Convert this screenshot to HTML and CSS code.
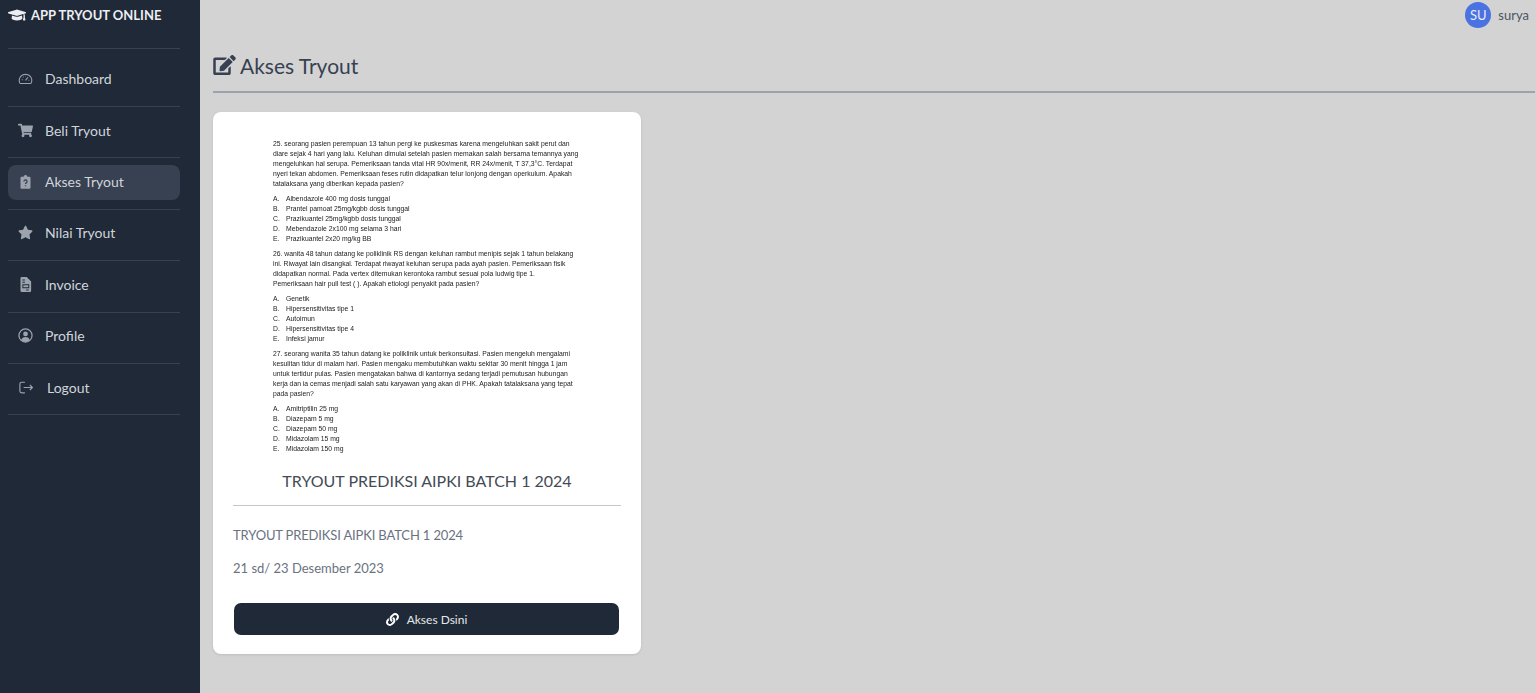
FILE: index.html
```html
<!DOCTYPE html>
<html lang="id">
<head>
    <meta charset="UTF-8">
    <meta name="viewport" content="width=device-width, initial-scale=1.0">
    <title>APP TRYOUT ONLINE</title>
    <link rel="stylesheet" href="styles.css">
</head>
<body>

<div class="app">
    <aside class="sidebar">
        <div class="brand">
            <svg class="brand-icon" viewBox="0 0 640 512"><g transform="translate(640 0) scale(-1 1)"><path d="M622.34 153.2L343.4 67.5c-15.2-4.67-31.6-4.67-46.79 0L17.66 153.2c-23.54 7.23-23.54 38.36 0 45.59l48.63 14.94c-10.67 13.19-17.23 29.28-17.88 46.9C38.78 266.15 32 276.11 32 288c0 10.78 5.68 19.85 13.86 25.65L20.33 428.53C18.11 438.52 25.71 448 35.94 448h56.11c10.24 0 17.84-9.48 15.62-19.47L82.14 313.65C90.32 307.85 96 298.78 96 288c0-11.57-6.47-21.25-15.66-26.87.76-15.02 8.44-28.3 20.69-36.72L296.6 284.5c9.06 2.78 26.44 6.25 46.79 0l278.95-85.7c23.55-7.24 23.55-38.36 0-45.6zM352.79 315.09c-28.53 8.76-52.84 3.92-65.59 0l-145.02-44.55L128 384c0 35.35 85.96 64 192 64s192-28.65 192-64l-14.18-113.47-145.03 44.56z"/></g></svg>
            <span>APP TRYOUT ONLINE</span>
        </div>

        <nav class="menu">
            <div class="menu-item menu-first">
                <a class="menu-link" href="#">
                    <svg class="menu-icon icon-line" viewBox="0 0 24 24" stroke-width="1.7"><path d="M4.2 20h15.6a1.5 1.5 0 0 0 1.3-.8A10 10 0 1 0 2.9 19.2a1.5 1.5 0 0 0 1.3.8z"/><path d="M12 15l4-5M6 14h1.5M17 15h1M8 9.500l.8.8M12 7.500v1"/></svg>
                    <span>Dashboard</span>
                </a>
            </div>
            <div class="menu-item">
                <a class="menu-link" href="#">
                    <svg class="menu-icon" viewBox="0 0 576 512"><path d="M528.12 301.319l47.273-208C578.806 78.301 567.391 64 551.99 64H159.208l-9.166-44.81C147.758 8.021 137.93 0 126.529 0H24C10.745 0 0 10.745 0 24v16c0 13.255 10.745 24 24 24h69.883l70.248 343.435C147.325 417.1 136 435.222 136 456c0 30.928 25.072 56 56 56s56-25.072 56-56c0-15.674-6.447-29.835-16.824-40h209.647C430.447 426.165 424 440.326 424 456c0 30.928 25.072 56 56 56s56-25.072 56-56c0-22.172-12.888-41.332-31.579-50.405l5.517-24.276c3.413-15.018-8.002-29.319-23.403-29.319H218.117l-6.545-32h293.145c11.206 0 20.92-7.754 23.403-18.681z"/></svg>
                    <span>Beli Tryout</span>
                </a>
            </div>
            <div class="menu-item">
                <a class="menu-link active" href="#">
                    <svg class="menu-icon" viewBox="0 0 24 24"><path d="M9 4.500a3 3 0 0 1 6 0h3.500A1.500 1.500 0 0 1 20 6v16a1.500 1.500 0 0 1-1.500 1.500h-13A1.500 1.500 0 0 1 4 22V6a1.500 1.500 0 0 1 1.500-1.500z"/><path class="bag-mark" d="M9.500 12a2.500 2.500 0 1 1 3.700 2.200c-.8.500-1.200.9-1.200 1.800M12 18v1.500"/></svg>
                    <span>Akses Tryout</span>
                </a>
            </div>
            <div class="menu-item">
                <a class="menu-link" href="#">
                    <svg class="menu-icon" viewBox="0 0 576 512"><path d="M259.3 17.8L194 150.2 47.9 171.5c-26.2 3.8-36.7 36.1-17.7 54.6l105.7 103-25 145.5c-4.5 26.3 23.2 46 46.4 33.7L288 439.6l130.7 68.7c23.2 12.2 50.9-7.4 46.4-33.7l-25-145.5 105.7-103c19-18.5 8.5-50.8-17.7-54.6L382 150.2 316.7 17.8c-11.7-23.6-45.6-23.9-57.4 0z"/></svg>
                    <span>Nilai Tryout</span>
                </a>
            </div>
            <div class="menu-item">
                <a class="menu-link" href="#">
                    <svg class="menu-icon" viewBox="0 0 24 24"><path fill-rule="evenodd" d="M6 0h8l7 7v15a2 2 0 0 1-2 2H6a2 2 0 0 1-2-2V2a2 2 0 0 1 2-2zm1 4v1.500h4V4zm0 3.500V9h4V7.500zM7 11.500v6.500h11v-6.500zm1.500 1.500h8v3.500h-8zM13 20v1.500h4V20z"/></svg>
                    <span>Invoice</span>
                </a>
            </div>
            <div class="menu-item">
                <a class="menu-link" href="#">
                    <svg class="menu-icon icon-line" viewBox="0 0 24 24" stroke-width="2"><circle cx="12" cy="12" r="10.500"/><circle class="icon-solid" cx="12" cy="9.500" r="3.800"/><path class="icon-solid" d="M5 19.500c1-3.500 3.800-5 7-5s6 1.500 7 5a10 10 0 0 1-14 0z"/></svg>
                    <span>Profile</span>
                </a>
            </div>
            <div class="menu-item">
                <a class="menu-link menu-logout" href="#">
                    <svg class="menu-icon icon-line" viewBox="0 0 24 24" stroke-width="1.8"><path d="M11 3.500H6A3 3 0 0 0 3 6.500v11a3 3 0 0 0 3 3h5"/><path d="M9 12h14M19 8l4 4-4 4"/></svg>
                    <span>Logout</span>
                </a>
            </div>
        </nav>
    </aside>

    <main class="main">
        <header class="topbar">
            <div class="avatar">SU</div>
            <span class="username">surya</span>
        </header>

        <h1 class="page-title">
            <svg class="title-icon" viewBox="0 0 576 512"><path d="M402.6 83.2l90.2 90.2c3.8 3.8 3.8 10 0 13.8L274.4 405.6l-92.8 10.3c-12.4 1.4-22.9-9.1-21.5-21.5l10.3-92.8L388.8 83.2c3.8-3.8 10-3.8 13.8 0zm162-22.9l-48.8-48.8c-15.2-15.2-39.9-15.2-55.2 0l-35.4 35.4c-3.8 3.8-3.8 10 0 13.8l90.2 90.2c3.8 3.8 10 3.8 13.8 0l35.4-35.4c15.2-15.3 15.2-40 0-55.2zM384 346.2V448H64V128h229.8c3.2 0 6.2-1.3 8.5-3.5l40-40c7.6-7.6 2.2-20.5-8.5-20.5H48C21.5 64 0 85.5 0 112v352c0 26.5 21.5 48 48 48h352c26.5 0 48-21.5 48-48V306.2c0-10.7-12.9-16-20.5-8.5l-40 40c-2.2 2.3-3.5 5.3-3.5 8.5z"/></svg>
            <span>Akses Tryout</span>
        </h1>
        <hr class="title-line">

        <div class="card">
            <div class="soal">
                <p>25. seorang pasien perempuan 13 tahun pergi ke puskesmas karena mengeluhkan sakit perut dan<br>diare sejak 4 hari yang lalu. Keluhan dimulai setelah pasien memakan salah bersama temannya yang<br>mengeluhkan hal serupa. Pemeriksaan tanda vital HR 90x/menit, RR 24x/menit, T 37,3°C. Terdapat<br>nyeri tekan abdomen. Pemeriksaan feses rutin didapatkan telur lonjong dengan operkulum. Apakah<br>tatalaksana yang diberikan kepada pasien?</p>
                <ol>
                    <li>Albendazole 400 mg dosis tunggal</li>
                    <li>Prantel pamoat 25mg/kgbb dosis tunggal</li>
                    <li>Prazikuantel 25mg/kgbb dosis tunggal</li>
                    <li>Mebendazole 2x100 mg selama 3 hari</li>
                    <li>Prazikuantel 2x20 mg/kg BB</li>
                </ol>
                <p>26. wanita 48 tahun datang ke poliklinik RS dengan keluhan rambut menipis sejak 1 tahun belakang<br>ini. Riwayat lain disangkal. Terdapat riwayat keluhan serupa pada ayah pasien. Pemeriksaan fisik<br>didapatkan normal. Pada vertex ditemukan kerontoka rambut sesuai pola ludwig tipe 1.<br>Pemeriksaan hair pull test ( ). Apakah etiologi penyakit pada pasien?</p>
                <ol>
                    <li>Genetik</li>
                    <li>Hipersensitivitas tipe 1</li>
                    <li>Autoimun</li>
                    <li>Hipersensitivitas tipe 4</li>
                    <li>Infeksi jamur</li>
                </ol>
                <p>27. seorang wanita 35 tahun datang ke poliklinik untuk berkonsultasi. Pasien mengeluh mengalami<br>kesulitan tidur di malam hari. Pasien mengaku membutuhkan waktu sekitar 30 menit hingga 1 jam<br>untuk tertidur pulas. Pasien mengatakan bahwa di kantornya sedang terjadi pemutusan hubungan<br>kerja dan ia cemas menjadi salah satu karyawan yang akan di PHK. Apakah tatalaksana yang tepat<br>pada pasien?</p>
                <ol>
                    <li>Amitriptilin 25 mg</li>
                    <li>Diazepam 5 mg</li>
                    <li>Diazepam 50 mg</li>
                    <li>Midazolam 15 mg</li>
                    <li>Midazolam 150 mg</li>
                </ol>
            </div>

            <h2 class="card-title">TRYOUT PREDIKSI AIPKI BATCH 1 2024</h2>
            <hr class="card-line">
            <p class="card-text card-name">TRYOUT PREDIKSI AIPKI BATCH 1 2024</p>
            <p class="card-text">21 sd/ 23 Desember 2023</p>
            <a class="btn-akses" href="#">
                <svg class="btn-icon" viewBox="0 0 512 512"><path d="M326.612 185.391c59.747 59.809 58.927 155.698.36 214.59-.11.12-.24.25-.36.37l-67.2 67.2c-59.27 59.27-155.699 59.262-214.96 0-59.27-59.26-59.27-155.7 0-214.96l37.106-37.106c9.84-9.84 26.786-3.3 27.294 10.606.648 17.722 3.826 35.527 9.69 52.721 1.986 5.822.567 12.262-3.783 16.612l-13.087 13.087c-28.026 28.026-28.905 73.66-1.155 101.96 28.024 28.579 74.086 28.749 102.325.51l67.2-67.19c28.191-28.191 28.073-73.757 0-101.83-3.701-3.694-7.429-6.564-10.341-8.569a16.037 16.037 0 0 1-6.947-12.606c-.396-10.567 3.348-21.456 11.698-29.806l21.054-21.055c5.521-5.521 14.182-6.199 20.584-1.731a152.482 152.482 0 0 1 20.522 17.197zM467.547 44.449c-59.261-59.262-155.69-59.27-214.96 0l-67.2 67.2c-.12.12-.25.25-.36.37-58.566 58.892-59.387 154.781.36 214.59a152.454 152.454 0 0 0 20.521 17.196c6.402 4.468 15.064 3.789 20.584-1.731l21.054-21.055c8.35-8.35 12.094-19.239 11.698-29.806a16.037 16.037 0 0 0-6.947-12.606c-2.912-2.005-6.64-4.875-10.341-8.569-28.073-28.073-28.191-73.639 0-101.83l67.2-67.19c28.239-28.239 74.3-28.069 102.325.51 27.75 28.3 26.872 73.934-1.155 101.96l-13.087 13.087c-4.35 4.35-5.769 10.79-3.783 16.612 5.864 17.194 9.042 34.999 9.69 52.721.509 13.906 17.454 20.446 27.294 10.606l37.106-37.106c59.271-59.259 59.271-155.699.001-214.959z"/></svg>
                <span>Akses Dsini</span>
            </a>
        </div>
    </main>
</div>

</body>
</html>
```

FILE: styles.css
```css
/* Layout */
* {
    box-sizing: border-box;
}

body {
    margin: 0;
    font-family: "Lato", "Open Sans", sans-serif;
    background-color: #d3d3d3;
    color: #374151;
}

.app {
    display: flex;
    height: 100vh;
    overflow: hidden;
}

/* Sidebar */
.sidebar {
    flex: 0 0 200px;
    padding: 0 20px 0 8px;
    background-color: #1f2937;
    color: #d1d5db;
}

.brand {
    display: flex;
    align-items: center;
    gap: 5px;
    height: 49px;
    padding-bottom: 19px;
    border-bottom: 1px solid #374151;
    font-size: 13px;
    font-weight: 700;
    color: #eceef1;
}

.brand-icon {
    width: 18px;
    height: 18px;
    fill: #eceef1;
}

.menu-item {
    display: flex;
    align-items: center;
    height: 51.4px;
    padding-bottom: 2px;
    border-bottom: 1px solid #374151;
}

.menu-first {
    align-items: flex-end;
    height: 58px;
    padding-bottom: 9px;
}

.menu-link {
    display: flex;
    flex: 1;
    align-items: center;
    gap: 12px;
    height: 35px;
    padding: 0 0 2px 10px;
    border-radius: 8px;
    font-size: 14px;
    color: #d1d5db;
    text-decoration: none;
}

.menu-link.active {
    background-color: #374151;
}

.menu-logout {
    gap: 14px;
}

.menu-icon {
    flex: 0 0 15px;
    width: 15px;
    height: 15px;
    fill: #9ca3af;
    stroke: none;
}

.icon-line {
    fill: none;
    stroke: #9ca3af;
}

.icon-solid {
    fill: #9ca3af;
    stroke: none;
}

.bag-mark {
    fill: none;
    stroke: #374151;
    stroke-width: 2;
}

/* Conteudo */
.main {
    flex: 1;
    min-width: 0;
    padding: 0 1px 0 13px;
}

.topbar {
    display: flex;
    align-items: center;
    justify-content: flex-end;
    gap: 7px;
    height: 30px;
    padding-right: 6px;
}

.avatar {
    display: flex;
    align-items: center;
    justify-content: center;
    width: 26px;
    height: 26px;
    border-radius: 50%;
    background-color: #4a72e0;
    font-size: 13px;
    color: #e8edfb;
}

.username {
    font-size: 13px;
    color: #4b5563;
}

.page-title {
    display: flex;
    align-items: center;
    gap: 4px;
    height: 36px;
    margin: 17px 0 0;
    font-size: 21px;
    font-weight: 400;
    color: #374151;
}

.title-icon {
    width: 23px;
    height: 20px;
    fill: #374151;
}

.title-line {
    height: 2px;
    margin: 8px 0 19px;
    border: 0;
    background-color: #9ca3af;
}

/* Card */
.card {
    width: 428px;
    height: 542px;
    padding: 0 20px;
    border-radius: 8px;
    background: #fff;
    box-shadow: 0 1px 3px rgba(0, 0, 0, 0.1);
}

.soal {
    height: 355px;
    padding: 27px 0 0 40px;
    font-family: "Liberation Sans", sans-serif;
    font-size: 6.8px;
    line-height: 10px;
    white-space: nowrap;
    color: #222;
    filter: blur(0.25px);
}

.soal p {
    margin: 0 0 5px;
}

.soal ol {
    margin: 0 0 5px;
    padding: 0;
    list-style: none;
    counter-reset: opsi;
}

.soal li {
    counter-increment: opsi;
}

.soal li::before {
    content: counter(opsi, upper-alpha) ".";
    display: inline-block;
    width: 13px;
}

.card-title {
    height: 38px;
    margin: 0;
    font-size: 16px;
    font-weight: 400;
    line-height: 28px;
    text-align: center;
    color: #444b55;
}

.card-line {
    height: 1px;
    margin: 0 0 19px;
    border: 0;
    background-color: #c4c6ca;
}

.card-text {
    height: 33px;
    margin: 0;
    font-size: 13px;
    line-height: 20px;
    color: #6b7280;
}

.card-name {
    letter-spacing: -0.15px;
}

.btn-akses {
    display: flex;
    align-items: center;
    justify-content: center;
    gap: 8px;
    height: 32px;
    margin: 12px 2px 0 1px;
    border-radius: 7px;
    background-color: #1f2937;
    font-size: 12px;
    color: #e5e7eb;
    text-decoration: none;
}

.btn-icon {
    width: 13px;
    height: 13px;
    fill: #fff;
}
```
